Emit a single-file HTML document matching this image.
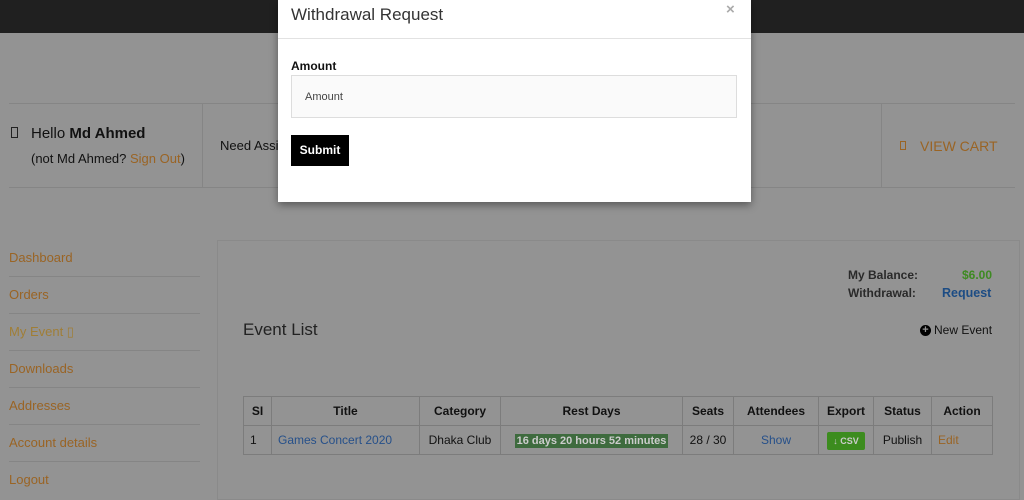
<!DOCTYPE html>
<html><head><meta charset="utf-8"><style>
*{box-sizing:border-box;margin:0;padding:0}
body{width:1024px;height:496px;overflow:hidden;background:#939393;font-family:"Liberation Sans",sans-serif;position:relative;color:#111}
.a{position:absolute}
.top{left:0;top:0;width:1024px;height:33px;background:#202020}
.or{color:#9a6424}
.line{background:#858585}
.nav div{position:absolute;left:9px;font-size:13px;color:#9a6424}
.nav .sep{left:9px;width:191px;height:1px;background:#858585}
table{border-collapse:collapse;font-size:12px;position:absolute;left:243px;top:396px;width:750px;table-layout:fixed}
td,th{border:1px solid #7c7c7c;height:29px;text-align:center;color:#111}
th{font-weight:bold}
.modal{left:278px;top:0;width:473px;height:202px;background:#fff;box-shadow:0 3px 8px rgba(0,0,0,.4)}
</style></head><body>
<div class="a top"></div>
<div class="a line" style="left:9px;top:103px;width:1006px;height:1px"></div>
<div class="a line" style="left:9px;top:187px;width:1006px;height:1px"></div>
<div class="a line" style="left:202px;top:104px;width:1px;height:83px"></div>
<div class="a line" style="left:881px;top:104px;width:1px;height:83px"></div>
<div class="a" style="left:11px;top:127px;width:7px;height:11px;border:1px solid #222"></div>
<div class="a" style="left:31px;top:125px;font-size:15px">Hello <b>Md Ahmed</b></div>
<div class="a" style="left:31px;top:151px;font-size:13px">(not Md Ahmed? <span class="or">Sign Out</span>)</div>
<div class="a" style="left:220px;top:138px;font-size:13px">Need Assistance? Email: support@yourshop.com</div>
<div class="a or" style="left:900px;top:141px;width:6px;height:9px;border:1px solid #9a6424"></div>
<div class="a or" style="left:920px;top:138px;font-size:14px">VIEW CART</div>
<div class="nav">
<div style="top:250px">Dashboard</div><div class="sep" style="top:276px"></div>
<div style="top:287px">Orders</div><div class="sep" style="top:313px"></div>
<div style="top:324px;color:#a07e36">My Event ▯</div><div class="sep" style="top:350px"></div>
<div style="top:361px">Downloads</div><div class="sep" style="top:387px"></div>
<div style="top:398px">Addresses</div><div class="sep" style="top:424px"></div>
<div style="top:435px">Account details</div><div class="sep" style="top:461px"></div>
<div style="top:472px">Logout</div>
</div>
<div class="a" style="left:217px;top:240px;width:803px;height:260px;border:1px solid #8a8a8a"></div>
<div class="a" style="left:848px;top:268px;font-size:12px;font-weight:bold;color:#2a2a2a">My Balance:</div>
<div class="a" style="left:962px;top:268px;font-size:12px;font-weight:bold;color:#3e8a22">$6.00</div>
<div class="a" style="left:848px;top:286px;font-size:12px;font-weight:bold;color:#2a2a2a">Withdrawal:</div>
<div class="a" style="left:942px;top:286px;font-size:12.5px;font-weight:bold;color:#1c4c84">Request</div>
<div class="a" style="left:243px;top:320px;font-size:17px;color:#222">Event List</div>
<div class="a" style="left:920px;top:325px;width:11px;height:11px;border-radius:50%;background:#000;color:#939393;font-size:11px;line-height:11px;text-align:center;font-weight:bold">+</div>
<div class="a" style="left:934px;top:323px;font-size:12px">New Event</div>
<table>
<tr><th style="width:28px">SI</th><th style="width:148px">Title</th><th style="width:81px">Category</th><th style="width:182px">Rest Days</th><th style="width:51px">Seats</th><th style="width:85px">Attendees</th><th style="width:55px">Export</th><th style="width:58px">Status</th><th>Action</th></tr>
<tr><td style="text-align:left;padding-left:6px">1</td><td style="color:#26508a;text-align:left;padding-left:6px">Games Concert 2020</td><td>Dhaka Club</td><td><span style="background:#3e6b3e;color:#ccc;font-weight:bold;font-size:11px;padding:1px 2px">16 days 20 hours 52 minutes</span></td><td>28 / 30</td><td style="color:#26508a">Show</td><td><span style="background:#3c8c1e;color:#ccc;font-size:9px;font-weight:bold;padding:4px 6px;border-radius:2px">↓ CSV</span></td><td>Publish</td><td style="text-align:left;padding-left:6px;color:#9a6424">Edit</td></tr>
</table>
<div class="a modal">
<div class="a" style="left:13px;top:5px;font-size:17px;color:#333">Withdrawal Request</div>
<div class="a" style="left:448px;top:1px;font-size:15px;color:#aaa;font-weight:bold">×</div>
<div class="a" style="left:0;top:38px;width:473px;height:1px;background:#e2e2e2"></div>
<div class="a" style="left:13px;top:59px;font-size:12px;font-weight:bold;color:#111">Amount</div>
<div class="a" style="left:13px;top:75px;width:446px;height:43px;border:1px solid #ddd;background:#fafafa;font-size:11px;color:#444;padding:15px 13px">Amount</div>
<div class="a" style="left:13px;top:135px;width:58px;height:31px;background:#000;color:#fff;font-size:12px;font-weight:bold;text-align:center;line-height:31px">Submit</div>
</div>
</body></html>
